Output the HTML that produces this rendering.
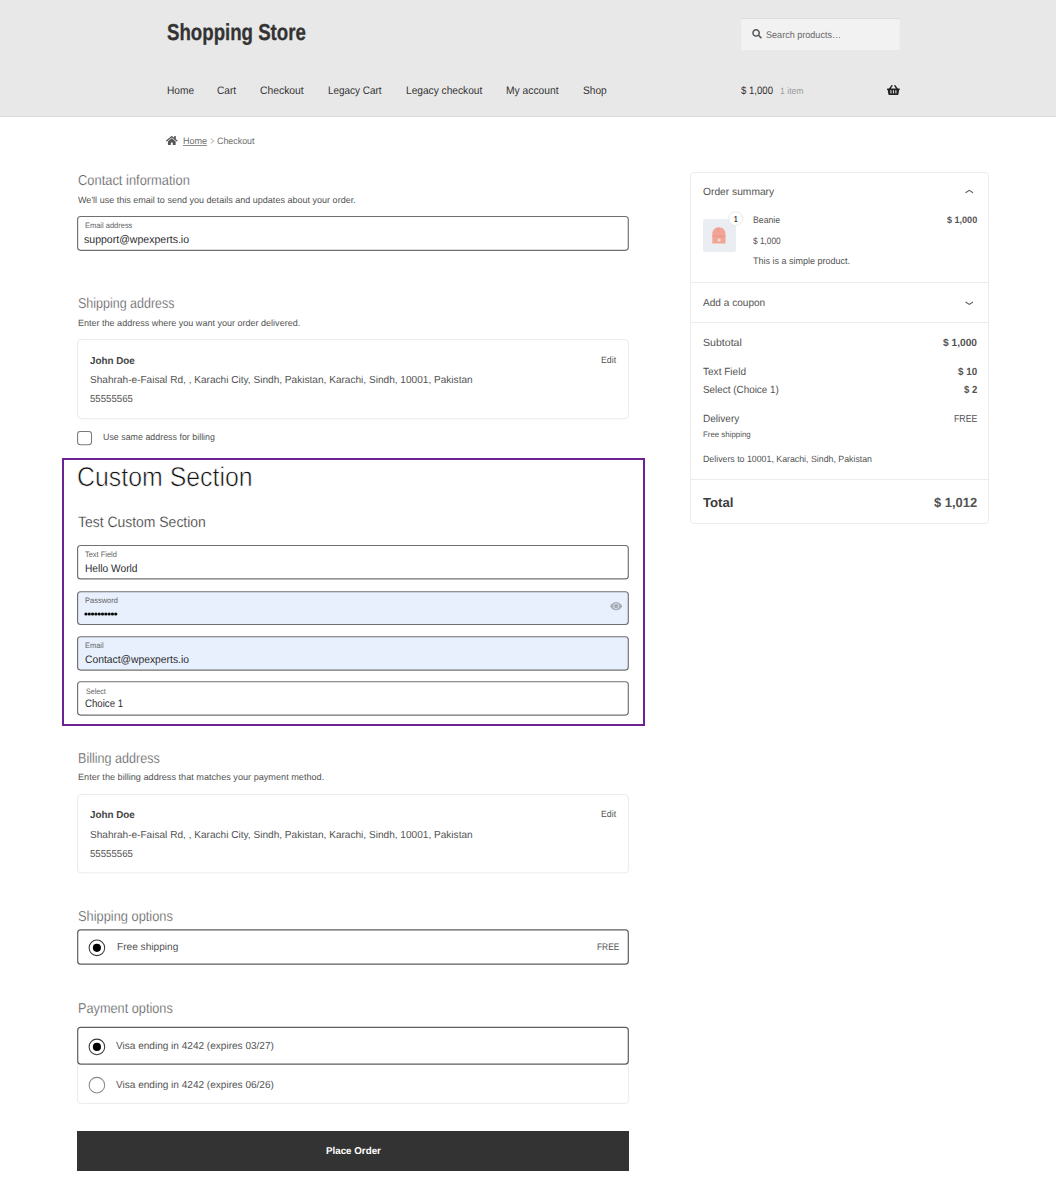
<!DOCTYPE html>
<html lang="en"><head><meta charset="utf-8"><title>Checkout</title>
<style>
html,body{margin:0;padding:0;}
body{width:1056px;height:1197px;position:relative;overflow:hidden;background:#fff;font-family:"Liberation Sans",sans-serif;}
.t{position:absolute;white-space:nowrap;line-height:1;transform-origin:0 0;display:block;text-rendering:geometricPrecision;}
.b{position:absolute;box-sizing:border-box;}
svg{position:absolute;overflow:visible;}
</style></head><body>
<!-- header -->
<div class="b" style="left:0;top:0;width:1056px;height:117px;background:#e8e8e8;border-bottom:1px solid #dcdcdc;"></div>
<div class="b" style="left:741px;top:18px;width:159px;height:32px;background:#f2f2f2;box-shadow:inset 0 1px 1px rgba(0,0,0,0.10);"></div>
<!-- search icon -->
<svg style="left:751.8px;top:29.4px;" width="10" height="9.6" viewBox="0 0 512 512"><path fill="#555" d="M505 442.700L405.300 343c-4.500-4.500-10.600-7-17-7H372c27.600-35.300 44-79.700 44-128C416 93.100 322.900 0 208 0S0 93.100 0 208s93.100 208 208 208c48.300 0 92.700-16.400 128-44v16.300c0 6.400 2.500 12.500 7 17l99.700 99.700c9.400 9.400 24.600 9.400 33.900 0l28.300-28.300c9.400-9.400 9.400-24.600.1-34zM208 336c-70.700 0-128-57.200-128-128 0-70.700 57.200-128 128-128 70.700 0 128 57.200 128 128 0 70.700-57.200 128-128 128z"/></svg>
<!-- basket icon -->
<svg style="left:887.4px;top:85.1px;" width="12.8" height="9.9" viewBox="0 32 576 448" preserveAspectRatio="none"><path fill="#222" d="M576 216v16c0 13.255-10.745 24-24 24h-8l-26.113 182.788C514.509 462.435 494.257 480 470.370 480H105.630c-23.887 0-44.139-17.565-47.518-41.212L32 256h-8c-13.255 0-24-10.745-24-24v-16c0-13.255 10.745-24 24-24h67.341l106.780-146.821c10.395-14.292 30.407-17.453 44.701-7.058 14.293 10.395 17.453 30.408 7.058 44.701L170.477 192h235.046L326.120 82.821c-10.395-14.292-7.234-34.306 7.059-44.701 14.291-10.395 34.306-7.235 44.701 7.058L484.659 192H552c13.255 0 24 10.745 24 24zM312 392V280c0-13.255-10.745-24-24-24s-24 10.745-24 24v112c0 13.255 10.745 24 24 24s24-10.745 24-24zm112 0V280c0-13.255-10.745-24-24-24s-24 10.745-24 24v112c0 13.255 10.745 24 24 24s24-10.745 24-24zm-224 0V280c0-13.255-10.745-24-24-24s-24 10.745-24 24v112c0 13.255 10.745 24 24 24s24-10.745 24-24z"/></svg>
<!-- home icon -->
<svg style="left:166.4px;top:135.6px;" width="11.6" height="9.1" viewBox="0 32 576 448" preserveAspectRatio="none"><path fill="#555" d="M280.370 148.260L96 300.110V464a16 16 0 0 0 16 16l112.060-.29a16 16 0 0 0 15.920-16V368a16 16 0 0 1 16-16h64a16 16 0 0 1 16 16v95.640a16 16 0 0 0 16 16.050L464 480a16 16 0 0 0 16-16V300L295.670 148.260a12.190 12.190 0 0 0-15.300 0zM571.600 251.470L488 182.560V44.050a12 12 0 0 0-12-12h-56a12 12 0 0 0-12 12v72.610L318.470 43a48 48 0 0 0-61 0L4.340 251.470a12 12 0 0 0-1.600 16.900l25.500 31A12 12 0 0 0 45.150 301l235.220-193.740a12.190 12.190 0 0 1 15.300 0L530.900 301a12 12 0 0 0 16.900-1.600l25.500-31a12 12 0 0 0-1.700-16.930z"/></svg>

<svg style="left:209.8px;top:138.2px;" width="5" height="6" viewBox="0 0 5 6"><path d="M0.800 0.600L3.700 2.900L0.800 5.200" fill="none" stroke="#c6c6c6" stroke-width="1.200"/></svg>
<!-- contact email input -->
<!-- shipping address card -->
<!-- checkbox -->
<svg style="left:0;top:0;" width="100" height="450" viewBox="0 0 100 450"><rect x="77.6" y="431.5" width="13.9" height="13.2" rx="2.6" fill="#fff" stroke="#7a7a7a" stroke-width="1.05"/></svg>

<svg style="left:0;top:0;" width="1056" height="1197" viewBox="0 0 1056 1197">
<rect x="77.60" y="339.50" width="550.80" height="79.20" rx="3.5" fill="none" stroke="#ebebeb" stroke-width="1"/>
<rect x="77.60" y="794.50" width="550.80" height="78.40" rx="3.5" fill="none" stroke="#ebebeb" stroke-width="1"/>

<rect x="77.60" y="216.50" width="550.70" height="33.80" rx="3" fill="#fff" stroke="#707070" stroke-width="1.15"/>
<rect x="77.60" y="545.50" width="550.70" height="33.40" rx="3" fill="#fff" stroke="#707070" stroke-width="1.15"/>
<rect x="77.60" y="591.70" width="550.70" height="32.80" rx="3" fill="#e8f0fe" stroke="#707070" stroke-width="1.15"/>
<rect x="77.60" y="636.70" width="550.70" height="33.40" rx="3" fill="#e8f0fe" stroke="#707070" stroke-width="1.15"/>
<rect x="77.60" y="681.70" width="550.70" height="33.40" rx="3" fill="#fff" stroke="#707070" stroke-width="1.15"/>


<path d="M77.6 1060 V1100.400 a3 3 0 0 0 3 3 H625.400 a3 3 0 0 0 3-3 V1060" fill="none" stroke="#ebebeb" stroke-width="1"/>
<rect x="77.70" y="929.90" width="550.60" height="34.30" rx="3" fill="#fff" stroke="#5e5e5e" stroke-width="1.2"/>
<rect x="77.70" y="1027.30" width="550.60" height="36.80" rx="3" fill="#fff" stroke="#5e5e5e" stroke-width="1.2"/>
<circle cx="96.9" cy="947.85" r="7.8" fill="#fff" stroke="#3a3a3a" stroke-width="1.05"/><circle cx="96.9" cy="947.85" r="4.05" fill="#000"/>
<circle cx="96.9" cy="1046.9" r="7.8" fill="#fff" stroke="#3a3a3a" stroke-width="1.05"/><circle cx="96.9" cy="1046.9" r="4.05" fill="#000"/>
<circle cx="96.9" cy="1085.2" r="7.8" fill="#fff" stroke="#8a8a8a" stroke-width="1.05"/>
</svg>
<!-- purple custom section -->
<div class="b" style="left:62px;top:458px;width:583px;height:267.500px;border:2px solid #6b2391;"></div>
<!-- password dots -->
<svg style="left:0;top:0;" width="200" height="700" viewBox="0 0 200 700"><g fill="#0c0c0c"><circle cx="85.95" cy="614.0" r="1.62"/><circle cx="89.26" cy="614.0" r="1.62"/><circle cx="92.57" cy="614.0" r="1.62"/><circle cx="95.88" cy="614.0" r="1.62"/><circle cx="99.19" cy="614.0" r="1.62"/><circle cx="102.50" cy="614.0" r="1.62"/><circle cx="105.81" cy="614.0" r="1.62"/><circle cx="109.12" cy="614.0" r="1.62"/><circle cx="112.43" cy="614.0" r="1.62"/><circle cx="115.74" cy="614.0" r="1.62"/></g></svg>
<!-- eye icon -->
<svg style="left:609.6px;top:601.6px;" width="12.3" height="8.3" viewBox="0 0 12.3 8.3"><path fill="#a7abb4" d="M0 4.150C2 1.100 4.100 0 6.150 0S10.300 1.100 12.300 4.150C10.300 7.200 8.200 8.300 6.150 8.300S2 7.200 0 4.150z"/><circle cx="6.150" cy="4.150" r="2.650" fill="none" stroke="#dfe6f3" stroke-width="0.9"/></svg>

<!-- billing card -->
<!-- shipping option -->
<!-- payment options -->
<!-- place order -->
<div class="b" style="left:77px;top:1131px;width:552px;height:39.500px;background:#333333;"></div>

<!-- order summary card -->
<div class="b" style="left:690.4px;top:171.7px;width:298.400px;height:352.500px;border:1px solid #ececec;border-radius:4px;"></div>
<div class="b" style="left:691px;top:282px;width:297px;height:1px;background:#ececec;"></div>
<div class="b" style="left:691px;top:321.500px;width:297px;height:1.500px;background:#ececec;"></div>
<div class="b" style="left:691px;top:479px;width:297px;height:1px;background:#ececec;"></div>
<!-- thumb -->
<div class="b" style="left:703px;top:219px;width:32.500px;height:33px;background:#eaeef3;border-radius:2px;"></div>
<svg style="left:712.3px;top:227.2px;" width="13.8" height="16.8" viewBox="0 0 13.8 16.8"><path fill="#f2a595" d="M0.300 16.600V7.200C0.300 3 3 0.200 6.900 0.200s6.600 2.800 6.600 7v9.400z"/><path fill="none" stroke="#e58a78" stroke-width="0.6" d="M0.300 9.200H13.500M6.200 0.500v4.500"/><rect x="5.700" y="11.800" width="2.800" height="2.600" fill="#e8e2dc"/></svg>
<!-- chevrons -->
<svg style="left:0;top:0;" width="1056" height="320" viewBox="0 0 1056 320"><g fill="none" stroke="#5c5c5c" stroke-width="1.050" stroke-linecap="square"><path d="M966 192.500L969.300 190.400L972.600 192.500"/><path d="M966 302.300L969.300 304.400L972.600 302.300"/></g><circle cx="735.600" cy="218.650" r="6.900" fill="#fff" stroke="#e6e6e6" stroke-width="0.900"/></svg>

<span class="t" style="left:167.00px;top:21.00px;font-size:23.1px;font-weight:700;color:#333333;transform:scaleX(0.8078);-webkit-text-stroke:0.3px #333;">Shopping Store</span>
<span class="t" style="left:167.00px;top:86.00px;font-size:10.9px;font-weight:400;color:#333333;transform:scaleX(0.9312);">Home</span>
<span class="t" style="left:216.60px;top:86.00px;font-size:10.9px;font-weight:400;color:#333333;transform:scaleX(0.9295);">Cart</span>
<span class="t" style="left:260.00px;top:86.00px;font-size:10.9px;font-weight:400;color:#333333;transform:scaleX(0.9504);">Checkout</span>
<span class="t" style="left:328.00px;top:86.00px;font-size:10.9px;font-weight:400;color:#333333;transform:scaleX(0.9115);">Legacy Cart</span>
<span class="t" style="left:406.00px;top:86.00px;font-size:10.9px;font-weight:400;color:#333333;transform:scaleX(0.9338);">Legacy checkout</span>
<span class="t" style="left:506.40px;top:86.00px;font-size:10.9px;font-weight:400;color:#333333;transform:scaleX(0.9450);">My account</span>
<span class="t" style="left:583.40px;top:86.00px;font-size:10.9px;font-weight:400;color:#333333;transform:scaleX(0.9300);">Shop</span>
<span class="t" style="left:766.00px;top:31.00px;font-size:9.6px;font-weight:400;color:#6a6a6a;transform:scaleX(0.9447);">Search products…</span>
<span class="t" style="left:741.00px;top:86.00px;font-size:10.9px;font-weight:400;color:#333333;transform:scaleX(0.8821);">$ 1,000</span>
<span class="t" style="left:779.80px;top:87.00px;font-size:9.2px;font-weight:400;color:#9a9a9a;transform:scaleX(0.9422);">1 item</span>
<span class="t" style="left:182.70px;top:137.00px;font-size:9.3px;font-weight:400;color:#6d6d6d;transform:scaleX(0.9704);text-decoration:underline;text-decoration-color:#8e8e8e;text-decoration-thickness:1.2px;text-underline-offset:1.2px;">Home</span>
<span class="t" style="left:217.30px;top:137.00px;font-size:9.3px;font-weight:400;color:#6d6d6d;transform:scaleX(0.9548);">Checkout</span>
<span class="t" style="left:77.90px;top:174.00px;font-size:14.4px;font-weight:400;color:#4c4c4c;transform:scaleX(0.8960);-webkit-text-stroke:0.3px #fff;">Contact information</span>
<span class="t" style="left:78.30px;top:196.00px;font-size:9.0px;font-weight:400;color:#535353;transform:scaleX(1.0036);">We'll use this email to send you details and updates about your order.</span>
<span class="t" style="left:84.70px;top:222.00px;font-size:7.9px;font-weight:400;color:#626262;transform:scaleX(0.9471);">Email address</span>
<span class="t" style="left:84.40px;top:235.00px;font-size:10.9px;font-weight:400;color:#2b2d2f;transform:scaleX(0.9681);">support@wpexperts.io</span>
<span class="t" style="left:77.90px;top:297.00px;font-size:14.4px;font-weight:400;color:#4c4c4c;transform:scaleX(0.8675);-webkit-text-stroke:0.3px #fff;">Shipping address</span>
<span class="t" style="left:78.30px;top:319.00px;font-size:9.0px;font-weight:400;color:#535353;transform:scaleX(1.0026);">Enter the address where you want your order delivered.</span>
<span class="t" style="left:89.80px;top:357.00px;font-size:10.1px;font-weight:700;color:#444;transform:scaleX(0.9748);">John Doe</span>
<span class="t" style="left:90.00px;top:376.00px;font-size:10.2px;font-weight:400;color:#535353;transform:scaleX(0.9899);">Shahrah-e-Faisal Rd, , Karachi City, Sindh, Pakistan, Karachi, Sindh, 10001, Pakistan</span>
<span class="t" style="left:90.00px;top:395.00px;font-size:10.2px;font-weight:400;color:#535353;transform:scaleX(0.9483);">55555565</span>
<span class="t" style="left:601.20px;top:356.00px;font-size:9.2px;font-weight:400;color:#535353;transform:scaleX(0.9522);">Edit</span>
<span class="t" style="left:102.60px;top:433.00px;font-size:9.1px;font-weight:400;color:#535353;transform:scaleX(0.9758);">Use same address for billing</span>
<span class="t" style="left:77.28px;top:463.00px;font-size:27.2px;font-weight:400;color:#111;transform:scaleX(0.9152);-webkit-text-stroke:0.6px #fff;">Custom Section</span>
<span class="t" style="left:77.80px;top:515.00px;font-size:15.0px;font-weight:400;color:#3a3a3a;transform:scaleX(0.9292);-webkit-text-stroke:0.2px #fff;">Test Custom Section</span>
<span class="t" style="left:84.90px;top:551.00px;font-size:7.9px;font-weight:400;color:#626262;transform:scaleX(0.9438);">Text Field</span>
<span class="t" style="left:84.80px;top:564.00px;font-size:10.9px;font-weight:400;color:#2b2d2f;transform:scaleX(0.9352);">Hello World</span>
<span class="t" style="left:84.70px;top:597.00px;font-size:7.9px;font-weight:400;color:#626262;transform:scaleX(0.9516);">Password</span>
<span class="t" style="left:84.70px;top:642.00px;font-size:7.9px;font-weight:400;color:#626262;transform:scaleX(0.9411);">Email</span>
<span class="t" style="left:84.70px;top:655.00px;font-size:10.9px;font-weight:400;color:#2b2d2f;transform:scaleX(0.9474);">Contact@wpexperts.io</span>
<span class="t" style="left:85.50px;top:688.00px;font-size:7.9px;font-weight:400;color:#626262;transform:scaleX(0.9016);">Select</span>
<span class="t" style="left:84.70px;top:699.00px;font-size:10.9px;font-weight:400;color:#2b2d2f;transform:scaleX(0.8852);">Choice 1</span>
<span class="t" style="left:77.63px;top:752.00px;font-size:14.4px;font-weight:400;color:#4c4c4c;transform:scaleX(0.8734);-webkit-text-stroke:0.3px #fff;">Billing address</span>
<span class="t" style="left:78.30px;top:773.00px;font-size:9.0px;font-weight:400;color:#535353;transform:scaleX(1.0147);">Enter the billing address that matches your payment method.</span>
<span class="t" style="left:89.80px;top:811.00px;font-size:10.1px;font-weight:700;color:#444;transform:scaleX(0.9748);">John Doe</span>
<span class="t" style="left:90.00px;top:831.00px;font-size:10.2px;font-weight:400;color:#535353;transform:scaleX(0.9899);">Shahrah-e-Faisal Rd, , Karachi City, Sindh, Pakistan, Karachi, Sindh, 10001, Pakistan</span>
<span class="t" style="left:90.00px;top:850.00px;font-size:10.2px;font-weight:400;color:#535353;transform:scaleX(0.9483);">55555565</span>
<span class="t" style="left:601.20px;top:810.00px;font-size:9.2px;font-weight:400;color:#535353;transform:scaleX(0.9522);">Edit</span>
<span class="t" style="left:78.10px;top:910.00px;font-size:14.4px;font-weight:400;color:#4c4c4c;transform:scaleX(0.8916);-webkit-text-stroke:0.3px #fff;">Shipping options</span>
<span class="t" style="left:116.80px;top:943.00px;font-size:10.2px;font-weight:400;color:#535353;transform:scaleX(0.9926);">Free shipping</span>
<span class="t" style="left:596.50px;top:943.00px;font-size:9.6px;font-weight:400;color:#535353;transform:scaleX(0.8734);">FREE</span>
<span class="t" style="left:77.62px;top:1002.00px;font-size:14.4px;font-weight:400;color:#4c4c4c;transform:scaleX(0.8840);-webkit-text-stroke:0.3px #fff;">Payment options</span>
<span class="t" style="left:116.40px;top:1042.00px;font-size:10.2px;font-weight:400;color:#535353;transform:scaleX(0.9862);">Visa ending in 4242 (expires 03/27)</span>
<span class="t" style="left:116.40px;top:1081.00px;font-size:10.2px;font-weight:400;color:#535353;transform:scaleX(0.9862);">Visa ending in 4242 (expires 06/26)</span>
<span class="t" style="left:326.00px;top:1147.00px;font-size:10.0px;font-weight:700;color:#ffffff;transform:scaleX(0.9778);">Place Order</span>
<span class="t" style="left:702.70px;top:188.00px;font-size:10.3px;font-weight:400;color:#535353;transform:scaleX(0.9949);">Order summary</span>
<span class="t" style="left:752.50px;top:216.00px;font-size:9.3px;font-weight:400;color:#535353;transform:scaleX(0.9347);">Beanie</span>
<span class="t" style="left:752.50px;top:237.00px;font-size:9.3px;font-weight:400;color:#535353;transform:scaleX(0.8915);">$ 1,000</span>
<span class="t" style="left:752.50px;top:257.00px;font-size:9.3px;font-weight:400;color:#535353;transform:scaleX(0.9684);">This is a simple product.</span>
<span class="t" style="left:947.00px;top:216.00px;font-size:9.3px;font-weight:700;color:#535353;transform:scaleX(0.9725);">$ 1,000</span>
<span class="t" style="left:733.90px;top:215.00px;font-size:8.6px;font-weight:700;color:#333333;transform:scaleX(0.7400);">1</span>
<span class="t" style="left:702.70px;top:299.00px;font-size:10.3px;font-weight:400;color:#535353;transform:scaleX(0.9792);">Add a coupon</span>
<span class="t" style="left:702.70px;top:339.00px;font-size:10.4px;font-weight:400;color:#535353;transform:scaleX(1.0180);">Subtotal</span>
<span class="t" style="left:942.80px;top:339.00px;font-size:10.4px;font-weight:700;color:#535353;transform:scaleX(0.9803);">$ 1,000</span>
<span class="t" style="left:702.70px;top:368.00px;font-size:10.4px;font-weight:400;color:#535353;transform:scaleX(0.9668);">Text Field</span>
<span class="t" style="left:957.70px;top:368.00px;font-size:10.4px;font-weight:700;color:#535353;transform:scaleX(0.9440);">$ 10</span>
<span class="t" style="left:702.70px;top:386.00px;font-size:10.4px;font-weight:400;color:#535353;transform:scaleX(0.9516);">Select (Choice 1)</span>
<span class="t" style="left:963.60px;top:386.00px;font-size:10.4px;font-weight:700;color:#535353;transform:scaleX(0.9137);">$ 2</span>
<span class="t" style="left:702.70px;top:415.00px;font-size:10.4px;font-weight:400;color:#535353;transform:scaleX(0.9678);">Delivery</span>
<span class="t" style="left:953.50px;top:415.00px;font-size:10.2px;font-weight:400;color:#535353;transform:scaleX(0.8584);">FREE</span>
<span class="t" style="left:702.70px;top:431.00px;font-size:7.9px;font-weight:400;color:#535353;transform:scaleX(0.9974);">Free shipping</span>
<span class="t" style="left:702.70px;top:455.00px;font-size:9.0px;font-weight:400;color:#535353;transform:scaleX(0.9764);">Delivers to 10001, Karachi, Sindh, Pakistan</span>
<span class="t" style="left:702.70px;top:496.00px;font-size:13.2px;font-weight:700;color:#3d3d3d;transform:scaleX(0.9981);">Total</span>
<span class="t" style="left:934.20px;top:496.00px;font-size:13.3px;font-weight:700;color:#535353;transform:scaleX(0.9734);">$ 1,012</span>
</body></html>
